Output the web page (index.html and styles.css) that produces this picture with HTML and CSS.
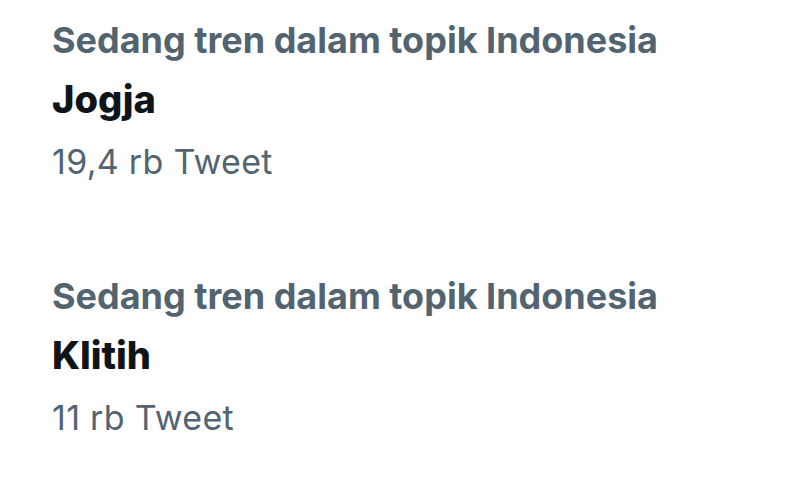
FILE: index.html
```html
<!DOCTYPE html>
<html>
<head>
<meta charset="utf-8">
<link rel="stylesheet" href="styles.css">
</head>
<body>
<div class="list">
  <div class="trend">
    <div class="meta">Sedang tren dalam topik Indonesia</div>
    <div class="name">Jogja</div>
    <div class="count">19,4 rb Tweet</div>
  </div>
  <div class="trend">
    <div class="meta">Sedang tren dalam topik Indonesia</div>
    <div class="name">Klitih</div>
    <div class="count">11 rb Tweet</div>
  </div>
</div>
</body>
</html>
```
FILE: styles.css
```css
html, body {
  margin: 0;
  padding: 0;
  background: #ffffff;
}
body {
  width: 800px;
  height: 500px;
  overflow: hidden;
  font-family: Inter, Roboto, "Liberation Sans", sans-serif;
}
.list {
  display: flex;
  flex-direction: column;
  gap: 90px;
  padding: 18px 0 0 52px;
}
.trend {
  display: flex;
  flex-direction: column;
}
.meta {
  color: #536471;
  font-weight: 700;
  font-size: 36px;
  line-height: 44px;
}
.name {
  color: #0f1419;
  font-weight: 800;
  font-size: 38px;
  line-height: 52px;
  margin-top: 11px;
}
.count {
  color: #536471;
  font-weight: 400;
  font-size: 34px;
  letter-spacing: 0.3px;
  line-height: 44px;
  margin-top: 15px;
}
```
